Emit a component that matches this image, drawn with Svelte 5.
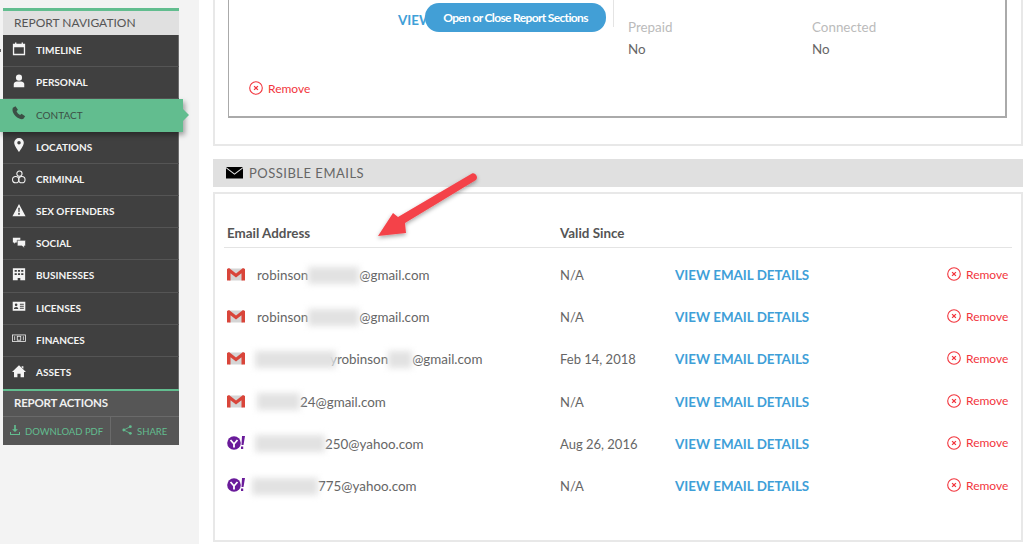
<script>
  const nav = [
    { id: "calendar", label: "TIMELINE" },
    { id: "user", label: "PERSONAL" },
    { id: "phone", label: "CONTACT", active: true },
    { id: "pin", label: "LOCATIONS" },
    { id: "cuffs", label: "CRIMINAL" },
    { id: "warn", label: "SEX OFFENDERS" },
    { id: "chat", label: "SOCIAL" },
    { id: "building", label: "BUSINESSES" },
    { id: "card", label: "LICENSES" },
    { id: "money", label: "FINANCES" },
    { id: "home", label: "ASSETS" }
  ];

  // blur = width of the redacted patch, before/after = visible bits of the address
  const emails = [
    { kind: "gmail", before: "robinson", blur: 51, after: "@gmail.com", since: "N/A" },
    { kind: "gmail", before: "robinson", blur: 51, after: "@gmail.com", since: "N/A" },
    { kind: "gmail", before: "", blur: 81, overlap: 6, after: "yrobinson", blur2: 24, after2: "@gmail.com", since: "Feb 14, 2018", shift: -2 },
    { kind: "gmail", before: "", blur: 43, after: "24@gmail.com", since: "N/A" },
    { kind: "yahoo", before: "", blur: 70, after: "250@yahoo.com", since: "Aug 26, 2016", shift: -2 },
    { kind: "yahoo", before: "", blur: 66, after: "775@yahoo.com", since: "N/A", shift: -5 }
  ];
</script>

{#snippet icon(id)}
  <svg class="nav-icon" viewBox="0 0 16 16" aria-hidden="true">
    {#if id === "calendar"}
      <path fill="currentColor" fill-rule="evenodd" d="M1 2h2.500V0.500h1.500V2h6V0.500h1.500V2H15v13H1zM2.500 6v7.500h11V6z" />
    {:else if id === "user"}
      <circle cx="8" cy="4.200" r="3.500" fill="currentColor" />
      <path fill="currentColor" d="M2 15v-3.500C2 9.500 4 8.500 5.500 8.500h5c1.500 0 3.500 1 3.500 3V15z" />
    {:else if id === "phone"}
      <path fill="currentColor" d="M1 2 4 .2l2.800 4.200-1.600 1.500c.6 1.700 2.300 3.500 4.100 4.300l1.600-1.400 4.100 2.900-1.900 3c-1 .6-2.800.6-4.800-.4C5 12.800 2.400 10 1.100 7 .4 5.200.4 3.300 1 2z" />
    {:else if id === "pin"}
      <path fill="currentColor" fill-rule="evenodd" d="M8 0a5.500 5.500 0 0 1 5.500 5.500C13.500 9 8 16 8 16S2.500 9 2.500 5.500A5.500 5.500 0 0 1 8 0zm0 3.500a2 2 0 1 0 0 4 2 2 0 0 0 0-4z" />
    {:else if id === "cuffs"}
      <g fill="none" stroke="currentColor" stroke-width="1.200">
        <circle cx="4.200" cy="11" r="3.600" />
        <circle cx="11.300" cy="11" r="3.600" />
        <circle cx="8.500" cy="4.200" r="3" />
      </g>
    {:else if id === "warn"}
      <path fill="currentColor" fill-rule="evenodd" d="M8 1l7.500 14H.5zM7.100 5.500l.3 5h1.200l.3-5zM7.100 11.500v1.800h1.800v-1.800z" />
    {:else if id === "chat"}
      <path fill="currentColor" d="M1 3h8.500v5.500H4L2.500 10V8.500H1z" />
      <path fill="currentColor" stroke="#404040" stroke-width=".8" d="M6 6h9.500v6.500H14V15l-2.500-2.500H6z" />
    {:else if id === "building"}
      <path fill="currentColor" fill-rule="evenodd" d="M1 1.500h14V15H9.500v-2.500h-3V15H1zM3 3.500v2h2.500v-2zM6.800 3.500v2h2.400v-2zM10.500 3.500v2H13v-2zM3 7v2h2.500V7zM6.800 7v2h2.400V7zM10.500 7v2H13V7z" />
    {:else if id === "card"}
      <path fill="currentColor" fill-rule="evenodd" d="M.8 3h14.400v10.500H.8zM4.700 5.200a1.500 1.500 0 1 0 0 3 1.500 1.500 0 0 0 0-3zM2.200 11.500h5c0-1.500-1-2.500-2.500-2.500s-2.500 1-2.500 2.500zM9 5.500v1h4.500v-1zM9 7.800v1h4.500v-1zM9 10v1h4.500v-1z" />
    {:else if id === "money"}
      <g fill="none" stroke="currentColor" stroke-width=".9">
        <rect x=".6" y="4.500" width="14.800" height="7.500" />
        <rect x="6" y="6" width="4" height="4.500" />
        <path d="M3 6v4.500M13 6v4.500" />
      </g>
    {:else}
      <path fill="currentColor" d="M8 1.500 16 9h-2.300v6H9.800v-4H6.200v4H2.300V9H0zM11 2.500h2v3l-2-1.800z" />
    {/if}
  </svg>
{/snippet}

{#snippet removeLink()}
  <a class="remove" href="#remove">
    <svg viewBox="0 0 14 14" aria-hidden="true">
      <circle cx="7" cy="7" r="6.300" fill="none" stroke="currentColor" stroke-width="1.100" />
      <path d="M5.100 5.100l3.800 3.800M8.900 5.100l-3.800 3.800" fill="none" stroke="currentColor" stroke-width="1.300" />
    </svg>
    Remove
  </a>
{/snippet}

<div class="page">
  <aside class="rail">
    <nav class="sidebar">
      <h2>REPORT NAVIGATION</h2>
      <ul>
        {#each nav as item}
          <li class:active={item.active}>
            {@render icon(item.id)}
            <span>{item.label}</span>
          </li>
        {/each}
      </ul>
      <h3>REPORT ACTIONS</h3>
      <div class="actions">
        <a class="pdf" href="#pdf">
          <svg viewBox="0 0 12 12" aria-hidden="true">
            <path fill="currentColor" d="M5 0h2v5h2.500L6 8.500 2.500 5H5zM0 8.500h1.200v2.300h9.600V8.500H12V12H0z" />
          </svg>
          DOWNLOAD PDF
        </a>
        <a class="share" href="#share">
          <svg viewBox="0 0 12 12" aria-hidden="true">
            <circle cx="10" cy="2" r="1.700" fill="currentColor" />
            <circle cx="10" cy="10" r="1.700" fill="currentColor" />
            <circle cx="2.200" cy="6" r="1.700" fill="currentColor" />
            <path d="M10 2 2.200 6 10 10" fill="none" stroke="currentColor" />
          </svg>
          SHARE
        </a>
      </div>
    </nav>
  </aside>

  <main>
    <section class="panel phone-panel">
      <div class="phone-box">
        <div class="phone-top">
          <div class="phone-left"><a class="link view-cut" href="#view">VIEW</a></div>
          <div class="phone-facts">
            <dl>
              <dt>Prepaid</dt>
              <dd>No</dd>
            </dl>
            <dl>
              <dt>Connected</dt>
              <dd>No</dd>
            </dl>
          </div>
        </div>
        {@render removeLink()}
      </div>
    </section>

    <header class="section-head">
      <svg viewBox="0 0 18 12" aria-hidden="true">
        <path fill="#000" d="M0 0h18L9 6.800zM0 1.300l9 6.800 9-6.800V12H0z" />
      </svg>
      POSSIBLE EMAILS
    </header>

    <section class="panel emails">
      <div class="row head">
        <span>Email Address</span>
        <span>Valid Since</span>
      </div>
      {#each emails as e}
        <div class="row">
          <div class="addr">
            {#if e.kind === "gmail"}
              <svg class="logo" viewBox="0 0 18 13" aria-hidden="true">
                <path fill="#d5d5d5" d="M2 1h14v12H2z" />
                <path fill="#d9453a" d="M0 1.500 2 .5l7 5.500 7-5.500 2 1V13h-3.500V5.800L9 10 3.500 5.800V13H0z" />
              </svg>
            {:else}
              <svg class="logo" viewBox="0 0 18 14" aria-hidden="true">
                <circle cx="7" cy="7" r="6.800" fill="#6a1b9a" />
                <path d="M3.500 4 7 8l3.500-4M7 8v3.500" fill="none" stroke="#fff" stroke-width="1.800" />
                <path fill="#6a1b9a" d="M15 0h3l-1.500 9h-2zM14 10.500h2.200V13H14z" />
              </svg>
            {/if}
            <span class="text" style:margin-left="{e.shift ?? 0}px">
              {e.before}<i class="smudge" style:width="{e.blur}px" style:margin-right="{-(e.overlap ?? 0)}px"></i>{e.after}{#if e.blur2}<i class="smudge" style:width="{e.blur2}px"></i>{e.after2}{/if}
            </span>
          </div>
          <span class="since">{e.since}</span>
          <a class="link" href="#details">VIEW EMAIL DETAILS</a>
          {@render removeLink()}
        </div>
      {/each}
    </section>
  </main>

  <button class="section-toggle">Open or Close Report Sections</button>

  <svg class="arrow" viewBox="0 0 115 80" aria-hidden="true">
    <defs>
      <filter id="arrow-shadow" x="-20%" y="-20%" width="140%" height="140%">
        <feDropShadow dx="0" dy="2" stdDeviation="2" flood-color="#000" flood-opacity=".35" />
      </filter>
    </defs>
    <path filter="url(#arrow-shadow)" fill="#f4434a" d="M102 8.500c3-1.500 7 3.500 4 6.500L35 58l1 10-28 3L23 48l5 4z" />
  </svg>
</div>

<style>
  :global(body) {
    margin: 0;
    background: #fff;
  }

  .page {
    position: relative;
    display: flex;
    height: 544px;
    overflow: hidden;
    font-family: Lato, "Open Sans", sans-serif;
    color: #555;
  }

  .rail {
    box-sizing: border-box;
    position: relative;
    flex: none;
    width: 199px;
    padding: 8px 0 0 3px;
    background: #f3f3f3;
  }

  /* stray tick at the window edge */
  .rail::before {
    content: "";
    position: absolute;
    left: 0;
    top: 49px;
    width: 1px;
    height: 3px;
    background: #666;
  }

  .sidebar {
    width: 176px;
  }

  h2 {
    margin: 0;
    height: 24px;
    padding-left: 11px;
    border-top: 3px solid #62bd8f;
    background: #e0e0e0;
    color: #555;
    font-size: 12px;
    font-weight: 400;
    line-height: 23px;
  }

  ul {
    margin: 0;
    padding: 0;
    list-style: none;
    background: #404040;
    box-shadow: inset -1px 0 0 #6e6e6e;
  }

  li {
    box-sizing: border-box;
    position: relative;
    display: flex;
    align-items: center;
    height: 32.2px;
    padding: 0 0 1px 9px;
    border-bottom: 1px solid #555;
    color: #f4f4f4;
    font-size: 10px;
    font-weight: 700;
  }

  li:last-child {
    border-bottom: 0;
  }

  li span {
    margin-left: 10px;
  }

  .nav-icon {
    flex: none;
    width: 14px;
    height: 14px;
    margin-top: -3px;
  }

  li.active {
    margin-left: -3px;
    width: 183px;
    padding-left: 12px;
    border-bottom: 0;
    background: #62bd8f;
    color: #3c4f45;
    font-weight: 400;
    box-shadow: 2px 3px 5px rgba(0, 0, 0, 0.35);
  }

  li.active::after {
    content: "";
    position: absolute;
    left: 100%;
    top: 10px;
    border-left: 6px solid #62bd8f;
    border-top: 6px solid transparent;
    border-bottom: 6px solid transparent;
  }

  h3 {
    margin: 0;
    height: 25px;
    padding-left: 11px;
    border-top: 2px solid #62bd8f;
    border-bottom: 1px solid #6a6a6a;
    background: #565656;
    color: #f0f0f0;
    font-size: 11.500px;
    font-weight: 700;
    letter-spacing: -0.2px;
    line-height: 24px;
  }

  .actions {
    display: flex;
    height: 28px;
    background: #565656;
    font-size: 9.500px;
  }

  .actions a {
    display: flex;
    align-items: center;
    gap: 5px;
    color: #62bd8f;
    text-decoration: none;
  }

  .actions svg {
    width: 10px;
    height: 10px;
    margin-top: -2px;
  }

  .pdf {
    box-sizing: border-box;
    width: 108px;
    padding-left: 7px;
    border-right: 1px solid #6a6a6a;
  }

  .share {
    padding-left: 11px;
  }

  main {
    box-sizing: border-box;
    flex: 1;
    min-width: 0;
    padding: 0 1px 0 14px;
  }

  .panel {
    box-sizing: border-box;
    border: 2px solid #e8e8e8;
    background: #fff;
  }

  .phone-panel {
    height: 146px;
    padding: 0 14px 0 13px;
    border-top: 0;
  }

  .phone-box {
    box-sizing: border-box;
    height: 118px;
    padding: 0 0 0 20px;
    border: solid #aaa;
    border-width: 0 2px 2px 1px;
  }

  .phone-top {
    display: flex;
    height: 79px;
  }

  .phone-left {
    box-sizing: border-box;
    width: 365px;
    height: 27px;
    padding: 11px 0 0 149px;
    border-right: 1px solid #e4e4e4;
  }

  .view-cut {
    display: block;
    line-height: 18px;
  }

  .phone-facts {
    display: flex;
    padding: 19px 0 0 14px;
  }

  dl {
    width: 184px;
    margin: 0;
    font-size: 13.400px;
  }

  dt {
    color: #bbb;
    line-height: 17px;
  }

  dd {
    margin: 5px 0 0;
    color: #666;
    line-height: 17px;
  }

  .section-head {
    box-sizing: border-box;
    display: flex;
    align-items: center;
    gap: 6px;
    height: 28px;
    margin: 13px 0 5px;
    padding-left: 13px;
    background: #e0e0e0;
    color: #666;
    font-size: 13px;
    letter-spacing: 0.5px;
  }

  .section-head svg {
    width: 17px;
    height: 11.500px;
  }

  .emails {
    height: 350px;
    padding: 26px 9px 0;
  }

  .row {
    display: grid;
    grid-template-columns: 333px 115px 272px 1fr;
    align-items: center;
    height: 42.2px;
    padding-left: 3px;
    font-size: 13.400px;
    color: #666;
  }

  .row.head {
    height: 26px;
    margin-bottom: 6px;
    padding-bottom: 1px;
    border-bottom: 1px solid #e4e4e4;
    font-weight: 700;
    color: #555;
  }

  .addr {
    display: flex;
    align-items: center;
  }

  .logo {
    flex: none;
    width: 18px;
    height: 14px;
    margin: -2px 12px 0 0;
  }

  .text {
    display: flex;
    align-items: center;
    white-space: nowrap;
  }

  .smudge {
    display: inline-block;
    height: 17px;
    background: #e2e2e2;
    filter: blur(3px);
  }

  .since {
    font-size: 13px;
  }

  .link {
    color: #3f9fd8;
    font-size: 13.400px;
    font-weight: 700;
    text-decoration: none;
  }

  .row .remove {
    margin-top: -2px;
  }

  .remove {
    display: inline-flex;
    align-items: center;
    gap: 5px;
    color: #f2353d;
    font-size: 12px;
    text-decoration: none;
  }

  .remove svg {
    width: 14px;
    height: 14px;
  }

  .section-toggle {
    position: absolute;
    left: 425px;
    top: 3px;
    width: 181px;
    height: 29px;
    padding: 0;
    border: 0;
    border-radius: 14px;
    background: #429fd6;
    color: #fff;
    font: 700 12px Lato, sans-serif;
    letter-spacing: -0.65px;
  }

  .arrow {
    position: absolute;
    left: 370px;
    top: 165px;
    width: 115px;
    height: 80px;
  }
</style>
